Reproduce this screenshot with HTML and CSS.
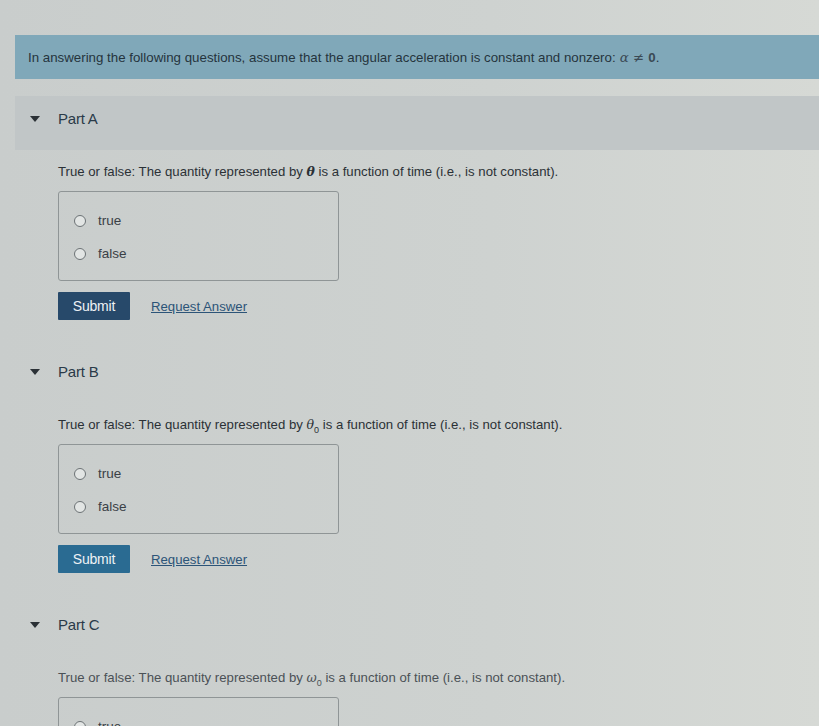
FILE: index.html
```html
<!DOCTYPE html>
<html lang="en">
<head>
<meta charset="utf-8">
<title>Parts</title>
<link rel="stylesheet" href="styles.css">
</head>
<body>
<div class="page">
  <div class="intro">In answering the following questions, assume that the angular acceleration is constant and nonzero: <span class="math"><i>α</i> ≠ <b>0</b></span>.</div>

  <section class="part">
    <div class="part-head shaded"><span class="caret"></span><span class="part-title">Part A</span></div>
    <p class="q">True or false: The quantity represented by <b><i>θ</i></b> is a function of time (i.e., is not constant).</p>
    <div class="options">
      <label class="opt"><span class="radio"></span>true</label>
      <label class="opt"><span class="radio"></span>false</label>
    </div>
    <div class="actions"><button class="submit">Submit</button><a class="req" href="#">Request Answer</a></div>
  </section>

  <section class="part">
    <div class="part-head"><span class="caret"></span><span class="part-title">Part B</span></div>
    <p class="q">True or false: The quantity represented by <i>θ</i><sub>0</sub> is a function of time (i.e., is not constant).</p>
    <div class="options">
      <label class="opt"><span class="radio"></span>true</label>
      <label class="opt"><span class="radio"></span>false</label>
    </div>
    <div class="actions"><button class="submit bright">Submit</button><a class="req" href="#">Request Answer</a></div>
  </section>

  <section class="part">
    <div class="part-head"><span class="caret"></span><span class="part-title">Part C</span></div>
    <p class="q light">True or false: The quantity represented by <i>ω</i><sub>0</sub> is a function of time (i.e., is not constant).</p>
    <div class="options">
      <label class="opt"><span class="radio"></span>true</label>
      <label class="opt"><span class="radio"></span>false</label>
    </div>
  </section>
</div>
</body>
</html>
```

FILE: styles.css
```css
html, body {
  margin: 0;
  padding: 0;
}
body {
  background: #cdd1cf;
  font-family: "Liberation Sans", Arial, sans-serif;
  color: #2c3237;
  overflow: hidden;
  height: 726px;
}
.page {
  padding: 35px 0 0 15px;
  background: linear-gradient(90deg, #c9cdcc 0%, #ced2d0 60%, #d6d9d5 100%);
  height: 100%;
}
.intro {
  background: #80a8b9;
  height: 44px;
  display: flex;
  align-items: center;
  padding-left: 13px;
  font-size: 13.3px;
  color: #25343d;
}
.intro .math {
  margin-left: 4px;
  font-family: "DejaVu Serif", serif;
  color: #3b4a55;
}
.intro .math b {
  font-family: "Liberation Sans", sans-serif;
}
.part {
  margin-top: 17px;
}
.part + .part {
  margin-top: 29px;
}
.part-head {
  height: 54px;
  box-sizing: border-box;
  padding-top: 13px;
  display: flex;
  align-items: flex-start;
  line-height: 20px;
}
.part-head.shaded {
  background: #c1c6c7;
}
.caret {
  width: 0;
  height: 0;
  border-left: 5px solid transparent;
  border-right: 5px solid transparent;
  border-top: 6px solid #2b3136;
  margin: 7px 0 0 15px;
}
.part-title {
  margin-left: 18px;
  font-size: 15px;
  color: #2a3a48;
  letter-spacing: -0.2px;
}
.q {
  margin: 13px 0 0 43px;
  font-size: 13.2px;
  line-height: 18px;
  color: #2b3136;
}
.q.light {
  color: #4b5156;
}
.q i {
  font-family: "DejaVu Serif", serif;
  font-size: 12.5px;
}
.q sub {
  font-size: 9px;
  line-height: 0;
}
.options {
  margin: 10px 0 0 43px;
  width: 281px;
  box-sizing: border-box;
  border: 1px solid #8f9596;
  border-radius: 3px;
  padding: 12px 0 10px 15px;
}
.opt {
  height: 33px;
  display: flex;
  align-items: center;
  font-size: 13.5px;
  color: #3a4046;
}
.radio {
  width: 10px;
  height: 10px;
  border: 1.5px solid #6c7275;
  border-radius: 50%;
  background: #e2e5e4;
  margin-right: 12px;
}
.actions {
  margin: 11px 0 0 43px;
  display: flex;
  align-items: center;
}
.submit {
  width: 72px;
  height: 28px;
  border: 0;
  border-radius: 1px;
  background: #27496a;
  color: #eef2f5;
  font-family: "Liberation Sans", Arial, sans-serif;
  font-size: 14px;
  letter-spacing: -0.2px;
  padding: 0;
}
.submit.bright {
  background: #2a6b92;
}
.req {
  margin-left: 21px;
  font-size: 13.2px;
  color: #2c5478;
  text-decoration: underline;
}
```
